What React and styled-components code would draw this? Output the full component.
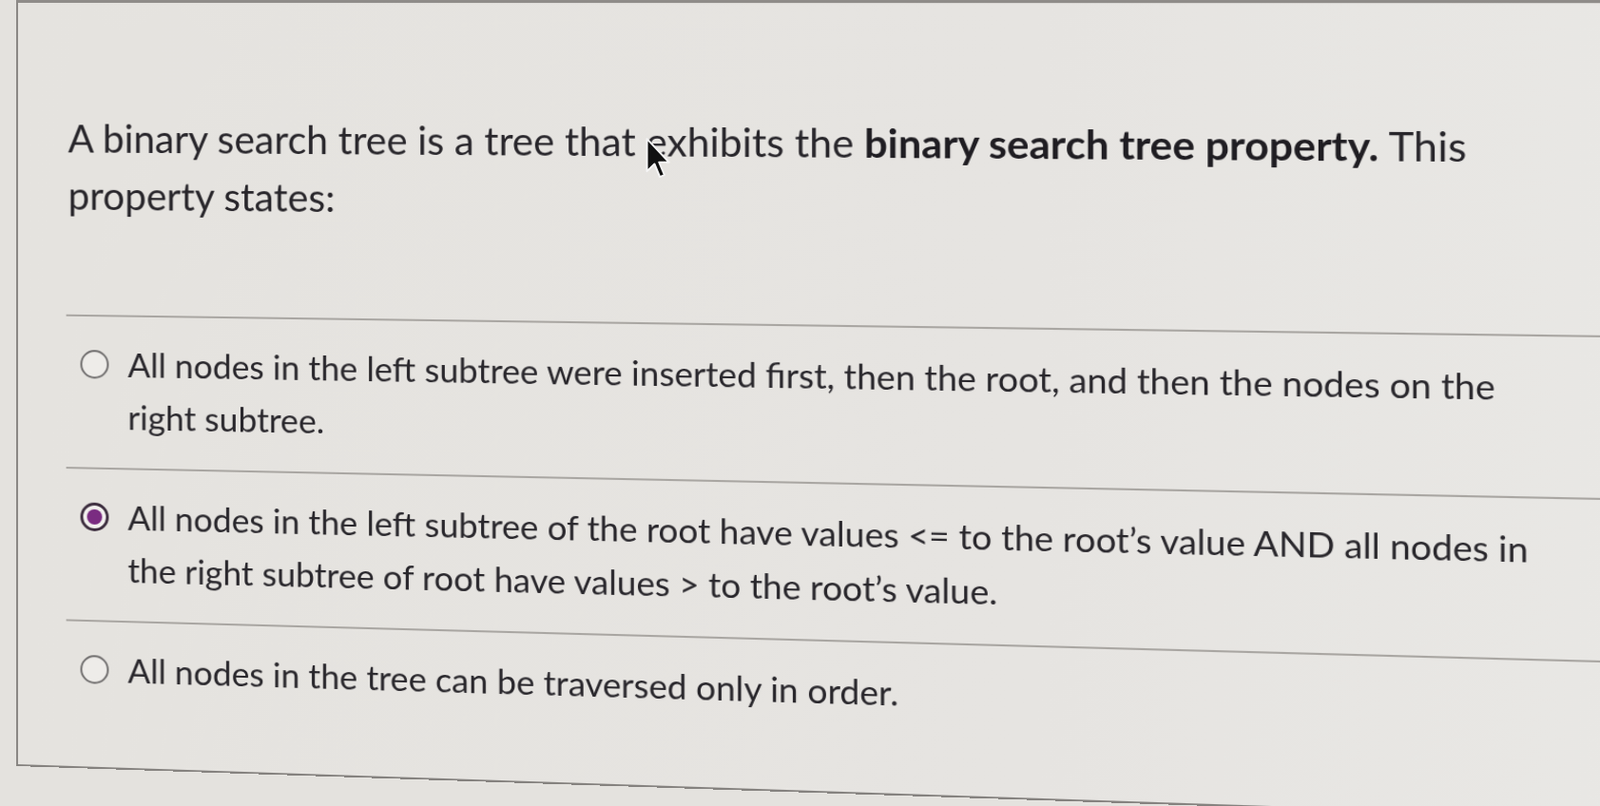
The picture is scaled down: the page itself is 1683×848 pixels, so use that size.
import React from "react";
import styled, { createGlobalStyle } from "styled-components";

const GlobalStyle = createGlobalStyle`
  html, body {
    margin: 0;
    padding: 0;
    background: #e4e2de;
    overflow: hidden;
  }
  body {
    font-family: Lato, "Open Sans", "Liberation Sans", sans-serif;
    color: #2c2a2e;
  }
  * { box-sizing: border-box; }
`;

const Page = styled.div`
  position: relative;
  width: 1683px;
  height: 848px;
  padding-left: 17px;
  overflow: hidden;
  background: #e4e2de;
`;

const Card = styled.div`
  width: 1720px;
  height: 806px;
  border-top: 3px solid #8f8c89;
  border-left: 2px solid #8a8784;
  border-bottom: 2px solid #85827f;
  background: linear-gradient(90deg, #e5e3df 0%, #e6e4e1 60%, #e9e8e5 100%);
  transform-origin: 0 0;
  transform: perspective(3390px) rotateY(-8deg);
`;

const Question = styled.div`
  padding: 112px 0 0 53px;
  width: 1490px;
  font-size: 40.6px;
  line-height: 60px;
  color: #28262b;

  b {
    font-weight: 700;
    color: #1f1d22;
  }
`;

const Options = styled.div`
  margin-top: 95px;
  margin-left: 51px;
`;

const Option = styled.div`
  display: flex;
  align-items: flex-start;
  gap: 20px;
  padding: 22px 0 26px 15px;
  border-top: 2px solid #a9a6a2;
`;

const Radio = styled.span`
  flex: none;
  width: 30px;
  height: 30px;
  margin-top: 13px;
  border-radius: 50%;
  border: ${(p) => (p.$checked ? "3px solid #3b2c3d" : "2px solid #6e6c6c")};
  background: ${(p) => (p.$checked ? "#f3f1ef" : "#eeece9")};
  display: flex;
  align-items: center;
  justify-content: center;

  &::after {
    content: "";
    display: ${(p) => (p.$checked ? "block" : "none")};
    width: 16px;
    height: 16px;
    border-radius: 50%;
    background: #7a2c81;
  }
`;

const OptionText = styled.div`
  width: 1405px;
  font-size: 35.2px;
  line-height: 55px;
  color: #29272c;
`;

const Cursor = styled.svg`
  position: absolute;
  left: 678px;
  top: 144px;
  width: 27px;
  height: 46px;
`;

const options = [
  {
    text: "All nodes in the left subtree were inserted first, then the root, and then the nodes on the right subtree.",
    checked: false,
  },
  {
    text: "All nodes in the left subtree of the root have values <= to the root’s value AND all nodes in the right subtree of root have values > to the root’s value.",
    checked: true,
  },
  {
    text: "All nodes in the tree can be traversed only in order.",
    checked: false,
  },
];

export default function App() {
  return (
    <>
      <GlobalStyle />
      <Page>
        <Card>
          <Question>
            A binary search tree is a tree that exhibits the <b>binary search tree property.</b> This
            property states:
          </Question>
          <Options>
            {options.map((o, i) => (
              <Option key={i}>
                <Radio $checked={o.checked} />
                <OptionText>{o.text}</OptionText>
              </Option>
            ))}
          </Options>
        </Card>
        <Cursor viewBox="0 0 12 21">
          <path
            d="M1 1 L1 16.5 L4.6 13 L7.2 19.2 L9.4 18.3 L6.8 12.2 L11.6 12.2 Z"
            fill="#111"
            stroke="#f5f5f5"
            strokeWidth="0.9"
            strokeLinejoin="round"
          />
        </Cursor>
      </Page>
    </>
  );
}
